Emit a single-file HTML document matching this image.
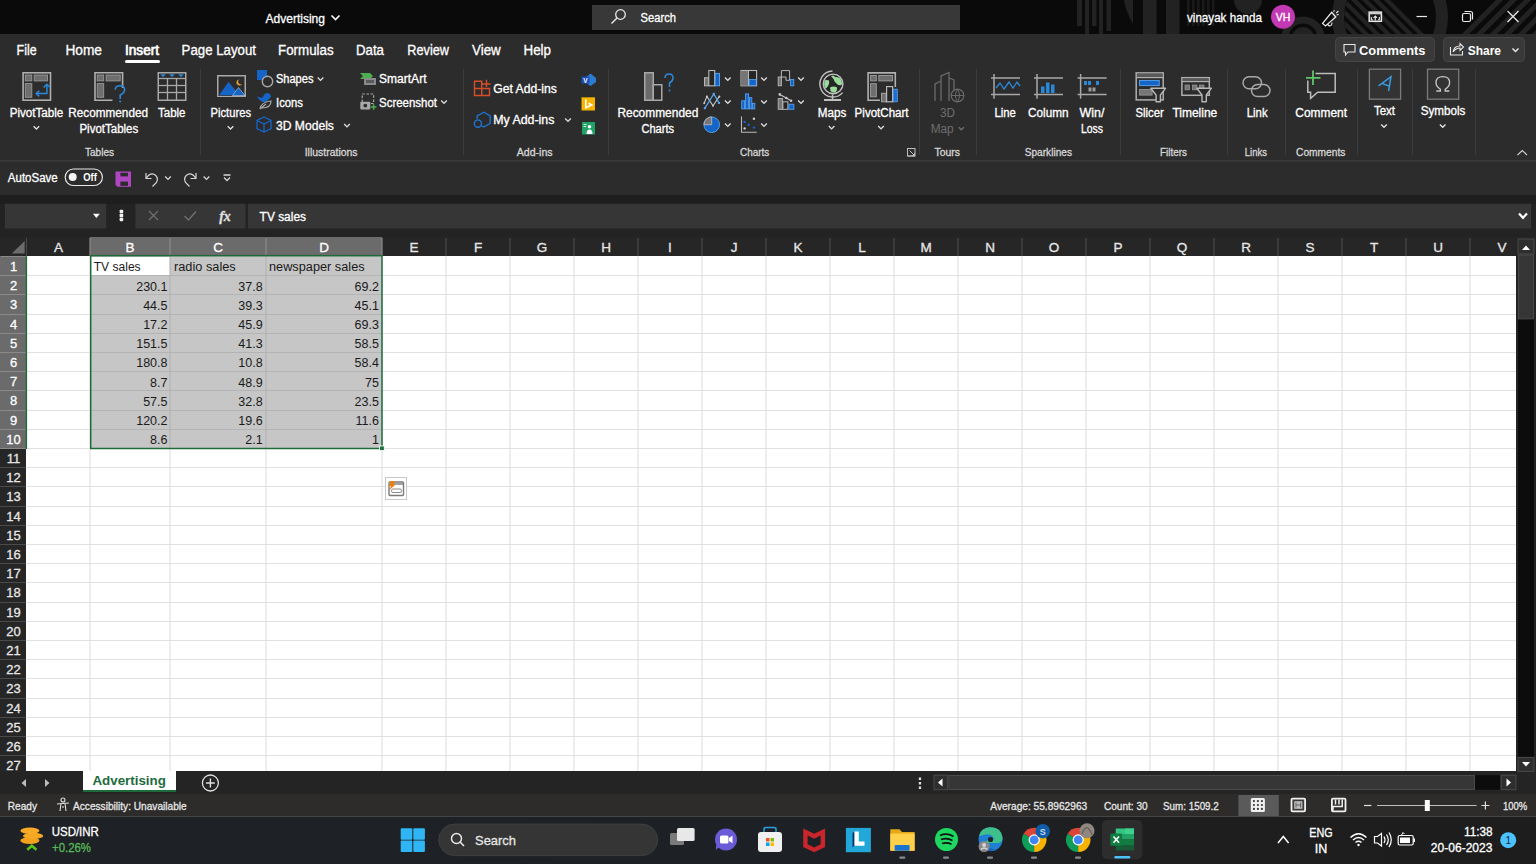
<!DOCTYPE html>
<html><head><meta charset="utf-8"><title>Advertising - Excel</title>
<style>
*{margin:0;padding:0}
html,body{width:1536px;height:864px;overflow:hidden;background:#0a0a0a}
svg{display:block;font-family:"Liberation Sans",sans-serif}
text{white-space:pre}
</style></head><body>
<svg width="1536" height="864" viewBox="0 0 1536 864">
<defs><clipPath id="gclip"><rect x="26" y="256" width="1490" height="515"/></clipPath><clipPath id="tclip"><rect x="0" y="0" width="1536" height="34"/></clipPath></defs>
<rect x="0" y="0" width="1536" height="34" fill="#0a0a0a"/>
<rect x="0" y="34" width="1536" height="126" fill="#2d2c2c"/>
<rect x="0" y="160" width="1536" height="35" fill="#2d2c2c"/>
<rect x="0" y="160" width="1536" height="1.5" fill="#3a3a3a"/>
<rect x="0" y="195" width="1536" height="43" fill="#232323"/>
<rect x="0" y="195" width="1536" height="9" fill="#1e1e1e"/>
<rect x="0" y="237" width="1536" height="19" fill="#262626"/>
<rect x="0" y="256" width="26" height="515" fill="#262626"/>
<rect x="26" y="256" width="1490" height="515.5" fill="#ffffff"/>
<rect x="1516" y="238" width="20" height="533" fill="#232323"/>
<rect x="0" y="771" width="1536" height="23" fill="#242424"/>
<rect x="0" y="794" width="1536" height="22" fill="#2d2c2b"/>
<defs><linearGradient id="tbg" x1="0" x2="1" y1="0" y2="0"><stop offset="0" stop-color="#1e2226"/><stop offset="0.62" stop-color="#1d2024"/><stop offset="0.76" stop-color="#1e1e1e"/><stop offset="1" stop-color="#1d1d1d"/></linearGradient></defs>
<rect x="0" y="816" width="1536" height="48" fill="url(#tbg)"/>
<g clip-path="url(#tclip)">
<rect x="1077" y="0" width="5" height="26" fill="#222222"/>
<rect x="1085" y="0" width="4" height="34" fill="#222222"/>
<rect x="1092" y="0" width="4.5" height="26" fill="#222222"/>
<rect x="1099" y="0" width="4" height="34" fill="#222222"/>
<rect x="1106.5" y="0" width="4.5" height="31" fill="#222222"/>
<rect x="1143" y="0" width="13.5" height="34" fill="#222222"/>
<rect x="1166" y="0" width="13.5" height="34" fill="#222222"/>
<path d="M1124,0 L1133,0 L1133,24 Q1126,12 1124,0 Z" fill="#222222"/>
<rect x="1187" y="0" width="2.5" height="26" fill="#1a1a1a"/>
<rect x="1192" y="0" width="2.5" height="26" fill="#1a1a1a"/>
<rect x="1197" y="0" width="2.5" height="26" fill="#1a1a1a"/>
<rect x="1202" y="0" width="2.5" height="26" fill="#1a1a1a"/>
<rect x="1207" y="0" width="2.5" height="26" fill="#1a1a1a"/>
<rect x="1212" y="0" width="2.5" height="26" fill="#1a1a1a"/>
<circle cx="1248" cy="0" r="14" fill="#222222"/>
<circle cx="1303" cy="38" r="11" fill="#222222"/>
<circle cx="1303" cy="38" r="18" fill="none" stroke="#222" stroke-width="7"/>
<circle cx="1390" cy="17" r="52" fill="none" stroke="#222" stroke-width="12"/>
<clipPath id="dclip"><circle cx="1390" cy="17" r="46"/></clipPath>
<g clip-path="url(#dclip)">
<path d="M1318,0 L1324,0 L1358,34 L1352,34 Z" fill="#222222"/>
<path d="M1329,0 L1335,0 L1369,34 L1363,34 Z" fill="#222222"/>
<path d="M1340,0 L1346,0 L1380,34 L1374,34 Z" fill="#222222"/>
<path d="M1351,0 L1357,0 L1391,34 L1385,34 Z" fill="#222222"/>
<path d="M1362,0 L1368,0 L1402,34 L1396,34 Z" fill="#222222"/>
<path d="M1373,0 L1379,0 L1413,34 L1407,34 Z" fill="#222222"/>
<path d="M1384,0 L1390,0 L1424,34 L1418,34 Z" fill="#222222"/>
</g>
<path d="M1462,34 L1469,34 L1503,0 L1496,0 Z" fill="#222222"/>
<path d="M1476,34 L1483,34 L1517,0 L1510,0 Z" fill="#222222"/>
<path d="M1490,34 L1497,34 L1531,0 L1524,0 Z" fill="#222222"/>
<path d="M1504,34 L1511,34 L1545,0 L1538,0 Z" fill="#222222"/>
<path d="M1518,34 L1525,34 L1559,0 L1552,0 Z" fill="#222222"/>
<path d="M1532,34 L1539,34 L1573,0 L1566,0 Z" fill="#222222"/>
</g>
<text x="265.5" y="22.5" font-size="13" fill="#ffffff" textLength="59.5" lengthAdjust="spacingAndGlyphs" stroke="#ffffff" stroke-width="0.3">Advertising</text>
<path d="M331.5,15.5 L335.5,19.5 L339.5,15.5" fill="none" stroke="#ffffff" stroke-width="1.625"/>
<rect x="592" y="5" width="368" height="25" fill="#383838"/>
<circle cx="620.5" cy="14.5" r="4.8" fill="none" stroke="#e8e8e8" stroke-width="1.3"/>
<line x1="617" y1="18" x2="611.5" y2="23.5" stroke="#e8e8e8" stroke-width="1.4"/>
<text x="640.5" y="21.5" font-size="12.5" fill="#ffffff" textLength="35.5" lengthAdjust="spacingAndGlyphs" stroke="#ffffff" stroke-width="0.3">Search</text>
<text x="1187" y="21.5" font-size="13" fill="#ffffff" textLength="75" lengthAdjust="spacingAndGlyphs" stroke="#ffffff" stroke-width="0.3">vinayak handa</text>
<circle cx="1283" cy="16.7" r="12" fill="#c239b3"/>
<text x="1283" y="20.8" font-size="10.5" fill="#ffffff" text-anchor="middle" stroke="#ffffff" stroke-width="0.3">VH</text>
<path d="M1322.6,23.4 L1331.7,12.3 L1335.8,17 L1325.5,26 Z" fill="none" stroke="#e8e8e8" stroke-width="1.3"/>
<path d="M1327.5,24 Q1328.5,26.5 1331,25.5 Q1332.5,24.5 1331.8,22.5" fill="none" stroke="#e8e8e8" stroke-width="1.2"/>
<path d="M1333.6,11.8 L1334.4,10.3 M1336.2,13 L1338.4,11 M1336.6,15 L1338.6,14.4" fill="none" stroke="#e8e8e8" stroke-width="1.1"/>
<rect x="1369.2" y="12.1" width="12.2" height="9.2" fill="none" stroke="#e8e8e8" stroke-width="1.5"/>
<rect x="1369.2" y="12.1" width="12.2" height="2.2" fill="#d0d0d0"/>
<path d="M1375.3,20.5 L1375.3,16 M1373.5,17.8 L1375.3,16 L1377.1,17.8 M1371.3,17 L1371.3,19.8 L1372.8,19.8 M1379.3,17 L1379.3,19.8 L1377.8,19.8" fill="none" stroke="#e8e8e8" stroke-width="1.1"/>
<line x1="1416.5" y1="16.5" x2="1427" y2="16.5" stroke="#e8e8e8" stroke-width="1.2"/>
<rect x="1462.5" y="13.5" width="8" height="8" fill="none" rx="1.5" stroke="#e8e8e8" stroke-width="1.2"/>
<path d="M1464.5,11.5 L1470.5,11.5 Q1472.5,11.5 1472.5,13.5 L1472.5,19.5" fill="none" stroke="#e8e8e8" stroke-width="1.2"/>
<path d="M1507.5,11 L1518.5,22 M1518.5,11 L1507.5,22" fill="none" stroke="#e8e8e8" stroke-width="1.2"/>
<text x="16.6" y="55" font-size="14" fill="#ffffff" textLength="20" lengthAdjust="spacingAndGlyphs" stroke="#ffffff" stroke-width="0.3">File</text>
<text x="65.4" y="55" font-size="14" fill="#ffffff" textLength="36.6" lengthAdjust="spacingAndGlyphs" stroke="#ffffff" stroke-width="0.3">Home</text>
<text x="125" y="55" font-size="14" fill="#ffffff" textLength="34" lengthAdjust="spacingAndGlyphs" stroke="#ffffff" stroke-width="0.7">Insert</text>
<text x="181.6" y="55" font-size="14" fill="#ffffff" textLength="74.4" lengthAdjust="spacingAndGlyphs" stroke="#ffffff" stroke-width="0.3">Page Layout</text>
<text x="278" y="55" font-size="14" fill="#ffffff" textLength="55.7" lengthAdjust="spacingAndGlyphs" stroke="#ffffff" stroke-width="0.3">Formulas</text>
<text x="356" y="55" font-size="14" fill="#ffffff" textLength="28" lengthAdjust="spacingAndGlyphs" stroke="#ffffff" stroke-width="0.3">Data</text>
<text x="407.3" y="55" font-size="14" fill="#ffffff" textLength="41.7" lengthAdjust="spacingAndGlyphs" stroke="#ffffff" stroke-width="0.3">Review</text>
<text x="472" y="55" font-size="14" fill="#ffffff" textLength="28.7" lengthAdjust="spacingAndGlyphs" stroke="#ffffff" stroke-width="0.3">View</text>
<text x="523.5" y="55" font-size="14" fill="#ffffff" textLength="27.5" lengthAdjust="spacingAndGlyphs" stroke="#ffffff" stroke-width="0.3">Help</text>
<rect x="125" y="60" width="35" height="3" fill="#ffffff" rx="1.5"/>
<rect x="1335.5" y="37.5" width="99" height="24" fill="#393939" rx="4" stroke="#454545" stroke-width="1"/>
<path d="M1344,44.5 L1355,44.5 L1355,52 L1348,52 L1345.5,55 L1345.5,52 L1344,52 Z" fill="none" stroke="#e8e8e8" stroke-width="1.1"/>
<text x="1359" y="54.5" font-size="13.5" fill="#ffffff" font-weight="700" textLength="66.5" lengthAdjust="spacingAndGlyphs">Comments</text>
<rect x="1443.5" y="37.5" width="81" height="24" fill="#393939" rx="4" stroke="#454545" stroke-width="1"/>
<path d="M1450.5,47 L1450.5,55 L1462.5,55 L1462.5,51 M1453,52 Q1454,46 1460,46 L1460,43.5 L1463.5,47 L1460,50.5 L1460,48 Q1456,48 1453,52 Z" fill="none" stroke="#e8e8e8" stroke-width="1.1"/>
<text x="1467.7" y="54.5" font-size="13.5" fill="#ffffff" font-weight="700" textLength="33.3" lengthAdjust="spacingAndGlyphs">Share</text>
<path d="M1512.5,48.5 L1515.5,51.5 L1518.5,48.5" fill="none" stroke="#e8e8e8" stroke-width="1.5"/>
<line x1="200.5" y1="69" x2="200.5" y2="155" stroke="#3c3c3c" stroke-width="1"/>
<line x1="463.5" y1="69" x2="463.5" y2="155" stroke="#3c3c3c" stroke-width="1"/>
<line x1="608.5" y1="69" x2="608.5" y2="155" stroke="#3c3c3c" stroke-width="1"/>
<line x1="919.5" y1="69" x2="919.5" y2="155" stroke="#3c3c3c" stroke-width="1"/>
<line x1="976.5" y1="69" x2="976.5" y2="155" stroke="#3c3c3c" stroke-width="1"/>
<line x1="1120.5" y1="69" x2="1120.5" y2="155" stroke="#3c3c3c" stroke-width="1"/>
<line x1="1227.5" y1="69" x2="1227.5" y2="155" stroke="#3c3c3c" stroke-width="1"/>
<line x1="1285.5" y1="69" x2="1285.5" y2="155" stroke="#3c3c3c" stroke-width="1"/>
<line x1="1357.5" y1="69" x2="1357.5" y2="155" stroke="#3c3c3c" stroke-width="1"/>
<line x1="1412.5" y1="69" x2="1412.5" y2="155" stroke="#3c3c3c" stroke-width="1"/>
<line x1="1475.5" y1="69" x2="1475.5" y2="155" stroke="#3c3c3c" stroke-width="1"/>
<text x="85" y="156" font-size="10.5" fill="#d6d6d6" textLength="29" lengthAdjust="spacingAndGlyphs" stroke="#d6d6d6" stroke-width="0.3">Tables</text>
<text x="304.7" y="156" font-size="10.5" fill="#d6d6d6" textLength="52.9" lengthAdjust="spacingAndGlyphs" stroke="#d6d6d6" stroke-width="0.3">Illustrations</text>
<text x="516.7" y="156" font-size="10.5" fill="#d6d6d6" textLength="36" lengthAdjust="spacingAndGlyphs" stroke="#d6d6d6" stroke-width="0.3">Add-ins</text>
<text x="740" y="156" font-size="10.5" fill="#d6d6d6" textLength="29.3" lengthAdjust="spacingAndGlyphs" stroke="#d6d6d6" stroke-width="0.3">Charts</text>
<text x="934.5" y="156" font-size="10.5" fill="#d6d6d6" textLength="25.5" lengthAdjust="spacingAndGlyphs" stroke="#d6d6d6" stroke-width="0.3">Tours</text>
<text x="1024.7" y="156" font-size="10.5" fill="#d6d6d6" textLength="47.3" lengthAdjust="spacingAndGlyphs" stroke="#d6d6d6" stroke-width="0.3">Sparklines</text>
<text x="1160" y="156" font-size="10.5" fill="#d6d6d6" textLength="27" lengthAdjust="spacingAndGlyphs" stroke="#d6d6d6" stroke-width="0.3">Filters</text>
<text x="1244.8" y="156" font-size="10.5" fill="#d6d6d6" textLength="22.2" lengthAdjust="spacingAndGlyphs" stroke="#d6d6d6" stroke-width="0.3">Links</text>
<text x="1296" y="156" font-size="10.5" fill="#d6d6d6" textLength="49.4" lengthAdjust="spacingAndGlyphs" stroke="#d6d6d6" stroke-width="0.3">Comments</text>
<text x="9.7" y="116.5" font-size="12" fill="#ffffff" textLength="53.6" lengthAdjust="spacingAndGlyphs" stroke="#ffffff" stroke-width="0.3">PivotTable</text>
<text x="68.3" y="116.5" font-size="12" fill="#ffffff" textLength="79.7" lengthAdjust="spacingAndGlyphs" stroke="#ffffff" stroke-width="0.3">Recommended</text>
<text x="158" y="116.5" font-size="12" fill="#ffffff" textLength="27.5" lengthAdjust="spacingAndGlyphs" stroke="#ffffff" stroke-width="0.3">Table</text>
<text x="210.5" y="116.5" font-size="12" fill="#ffffff" textLength="40.5" lengthAdjust="spacingAndGlyphs" stroke="#ffffff" stroke-width="0.3">Pictures</text>
<text x="617.4" y="116.5" font-size="12" fill="#ffffff" textLength="80.9" lengthAdjust="spacingAndGlyphs" stroke="#ffffff" stroke-width="0.3">Recommended</text>
<text x="817.8" y="116.5" font-size="12" fill="#ffffff" textLength="28.5" lengthAdjust="spacingAndGlyphs" stroke="#ffffff" stroke-width="0.3">Maps</text>
<text x="854.6" y="116.5" font-size="12" fill="#ffffff" textLength="54" lengthAdjust="spacingAndGlyphs" stroke="#ffffff" stroke-width="0.3">PivotChart</text>
<text x="994.5" y="116.5" font-size="12" fill="#ffffff" textLength="21.4" lengthAdjust="spacingAndGlyphs" stroke="#ffffff" stroke-width="0.3">Line</text>
<text x="1028" y="116.5" font-size="12" fill="#ffffff" textLength="40.5" lengthAdjust="spacingAndGlyphs" stroke="#ffffff" stroke-width="0.3">Column</text>
<text x="1079.5" y="116.5" font-size="12" fill="#ffffff" textLength="24.9" lengthAdjust="spacingAndGlyphs" stroke="#ffffff" stroke-width="0.3">Win/</text>
<text x="1135.4" y="116.5" font-size="12" fill="#ffffff" textLength="28.5" lengthAdjust="spacingAndGlyphs" stroke="#ffffff" stroke-width="0.3">Slicer</text>
<text x="1172.4" y="116.5" font-size="12" fill="#ffffff" textLength="44.9" lengthAdjust="spacingAndGlyphs" stroke="#ffffff" stroke-width="0.3">Timeline</text>
<text x="1246.7" y="116.5" font-size="12" fill="#ffffff" textLength="20.9" lengthAdjust="spacingAndGlyphs" stroke="#ffffff" stroke-width="0.3">Link</text>
<text x="1295.3" y="116.5" font-size="12" fill="#ffffff" textLength="51.7" lengthAdjust="spacingAndGlyphs" stroke="#ffffff" stroke-width="0.3">Comment</text>
<text x="79.4" y="132.6" font-size="12" fill="#ffffff" textLength="58.9" lengthAdjust="spacingAndGlyphs" stroke="#ffffff" stroke-width="0.3">PivotTables</text>
<text x="641.4" y="132.6" font-size="12" fill="#ffffff" textLength="32.6" lengthAdjust="spacingAndGlyphs" stroke="#ffffff" stroke-width="0.3">Charts</text>
<text x="1081" y="132.6" font-size="12" fill="#ffffff" textLength="22" lengthAdjust="spacingAndGlyphs" stroke="#ffffff" stroke-width="0.3">Loss</text>
<text x="1373.9" y="114.8" font-size="12" fill="#ffffff" textLength="21.1" lengthAdjust="spacingAndGlyphs" stroke="#ffffff" stroke-width="0.3">Text</text>
<text x="1420.7" y="114.8" font-size="12" fill="#ffffff" textLength="44.7" lengthAdjust="spacingAndGlyphs" stroke="#ffffff" stroke-width="0.3">Symbols</text>
<text x="940" y="116.5" font-size="12" fill="#6e6e6e" textLength="15" lengthAdjust="spacingAndGlyphs">3D</text>
<text x="930.7" y="132.5" font-size="12" fill="#6e6e6e" textLength="23" lengthAdjust="spacingAndGlyphs">Map</text>
<path d="M958.6999999999999,127.2 L961.3,129.8 L963.9,127.2" fill="none" stroke="#6e6e6e" stroke-width="1.375"/>
<path d="M33.6,126.3 L36.4,129.1 L39.199999999999996,126.3" fill="none" stroke="#e0e0e0" stroke-width="1.375"/>
<path d="M227.7,126.3 L230.5,129.1 L233.3,126.3" fill="none" stroke="#e0e0e0" stroke-width="1.375"/>
<path d="M828.8000000000001,126.1 L831.6,128.9 L834.4,126.1" fill="none" stroke="#e0e0e0" stroke-width="1.375"/>
<path d="M878.2,126.1 L881,128.9 L883.8,126.1" fill="none" stroke="#e0e0e0" stroke-width="1.375"/>
<path d="M1381.2,124.39999999999999 L1384,127.2 L1386.8,124.39999999999999" fill="none" stroke="#e0e0e0" stroke-width="1.375"/>
<path d="M1439.9,124.39999999999999 L1442.7,127.2 L1445.5,124.39999999999999" fill="none" stroke="#e0e0e0" stroke-width="1.375"/>
<path d="M1517.5,155 L1522.3,150.5 L1527,155" fill="none" stroke="#d0d0d0" stroke-width="1.1"/>
<path d="M907.5,148.5 L907.5,156 L915,156 M909.5,150.5 L914.5,155.5 M912,155.5 L914.5,155.5 L914.5,153" fill="none" stroke="#bdbdbd" stroke-width="1"/>
<rect x="907.5" y="148.5" width="7.5" height="7.5" fill="none" stroke="#bdbdbd" stroke-width="1"/>
<text x="275.9" y="83.4" font-size="12" fill="#ffffff" textLength="37.6" lengthAdjust="spacingAndGlyphs" stroke="#ffffff" stroke-width="0.3">Shapes</text>
<text x="276" y="106.6" font-size="12" fill="#ffffff" textLength="27" lengthAdjust="spacingAndGlyphs" stroke="#ffffff" stroke-width="0.3">Icons</text>
<text x="276" y="129.8" font-size="12" fill="#ffffff" textLength="57.9" lengthAdjust="spacingAndGlyphs" stroke="#ffffff" stroke-width="0.3">3D Models</text>
<text x="379" y="83.4" font-size="12" fill="#ffffff" textLength="47.5" lengthAdjust="spacingAndGlyphs" stroke="#ffffff" stroke-width="0.3">SmartArt</text>
<text x="379" y="106.6" font-size="12" fill="#ffffff" textLength="58" lengthAdjust="spacingAndGlyphs" stroke="#ffffff" stroke-width="0.3">Screenshot</text>
<text x="493.3" y="92.5" font-size="12" fill="#ffffff" textLength="63.5" lengthAdjust="spacingAndGlyphs" stroke="#ffffff" stroke-width="0.3">Get Add-ins</text>
<text x="493.3" y="124.3" font-size="12" fill="#ffffff" textLength="61.1" lengthAdjust="spacingAndGlyphs" stroke="#ffffff" stroke-width="0.3">My Add-ins</text>
<path d="M317.7,77.6 L320.5,80.4 L323.3,77.6" fill="none" stroke="#e0e0e0" stroke-width="1.375"/>
<path d="M344.2,124.1 L347,126.9 L349.8,124.1" fill="none" stroke="#e0e0e0" stroke-width="1.375"/>
<path d="M441.2,100.6 L444,103.4 L446.8,100.6" fill="none" stroke="#e0e0e0" stroke-width="1.375"/>
<path d="M565.2,118.6 L568,121.4 L570.8,118.6" fill="none" stroke="#e0e0e0" stroke-width="1.375"/>
<rect x="23.1" y="72.8" width="27.4" height="27.4" fill="none" stroke="#b0b0b0" stroke-width="1.6"/>
<rect x="25.3" y="75" width="6.5" height="5.900000000000006" fill="#6e6e6e" stroke="#9a9a9a" stroke-width="0.9"/>
<rect x="34.2" y="75" width="13.299999999999997" height="5.900000000000006" fill="#6e6e6e" stroke="#9a9a9a" stroke-width="0.9"/>
<rect x="25.3" y="83.6" width="6.5" height="13.700000000000003" fill="#6e6e6e" stroke="#9a9a9a" stroke-width="0.9"/>
<path d="M36.5,93.6 L46.9,93.6 L46.9,84.5 M43.6,87.5 L46.9,84.2 L50.2,87.5 M39.3,90.8 L36.2,93.6 L39.3,96.4" fill="none" stroke="#2b88d8" stroke-width="1.5"/>
<path d="M122.6,88 L122.6,72.8 L95,72.8 L95,100.2 L112.5,100.2" fill="none" stroke="#b0b0b0" stroke-width="1.6"/>
<rect x="97.2" y="75" width="6.5" height="5.900000000000006" fill="#6e6e6e" stroke="#9a9a9a" stroke-width="0.9"/>
<rect x="106.1" y="75" width="14.100000000000009" height="5.900000000000006" fill="#6e6e6e" stroke="#9a9a9a" stroke-width="0.9"/>
<rect x="97.2" y="83.6" width="6.5" height="13.700000000000003" fill="#6e6e6e" stroke="#9a9a9a" stroke-width="0.9"/>
<path d="M115.3,89.8 Q115.3,85.8 120,85.8 Q124.6,85.8 124.6,89.8 Q124.6,92.8 120.2,95 L120.2,99" fill="none" stroke="#2b88d8" stroke-width="1.6"/>
<circle cx="120.2" cy="101.6" r="1" fill="#2b88d8"/>
<rect x="158.25" y="72.75" width="27.5" height="27.5" fill="none" stroke="#a8a8a8" stroke-width="1.5"/>
<line x1="158" y1="78.5" x2="186" y2="78.5" stroke="#a8a8a8" stroke-width="1.3"/>
<line x1="158" y1="85.5" x2="186" y2="85.5" stroke="#a8a8a8" stroke-width="1.3"/>
<line x1="158" y1="92.5" x2="186" y2="92.5" stroke="#a8a8a8" stroke-width="1.3"/>
<line x1="167.5" y1="78" x2="167.5" y2="100" stroke="#a8a8a8" stroke-width="1.3"/>
<line x1="176.5" y1="78" x2="176.5" y2="100" stroke="#a8a8a8" stroke-width="1.3"/>
<path d="M160.2,74.3 L165.8,74.3 L163,77.3 Z" fill="#2b88d8"/>
<path d="M169.2,74.3 L174.8,74.3 L172,77.3 Z" fill="#2b88d8"/>
<path d="M178.2,74.3 L183.8,74.3 L181,77.3 Z" fill="#2b88d8"/>
<rect x="217.75" y="75.75" width="27.5" height="20.5" fill="none" stroke="#a8a8a8" stroke-width="1.5"/>
<path d="M218.5,95.5 L228.5,81.5 L240,95.5 Z" fill="#1565c9" stroke="#2d2c2c" stroke-width="0.6"/>
<path d="M232.5,95.5 L238.5,87.5 L245,95.5 Z" fill="#1565c9" stroke="#e0e0e0" stroke-width="0.5"/>
<path d="M239.5,79.5 A3,3 0 1 0 242,84 A2.3,2.3 0 0 1 239.5,79.5 Z" fill="#e8a33d"/>
<rect x="257" y="70" width="10" height="10" fill="#1565c9"/>
<circle cx="267.5" cy="81.5" r="5.2" fill="#2d2c2c" stroke="#a8a8a8" stroke-width="1.4"/>
<path d="M257,96 Q261,99 263,97 Q264,93 268,93 Q271,94 271,97 L266,102 Q260,103 257,96 Z" fill="#1565c9"/>
<path d="M260,109 Q261,102 271,101 Q271,108 262,108 M260,109 L266,104" fill="none" stroke="#a8a8a8" stroke-width="1.2"/>
<path d="M264,117 L271,120.5 L271,128.5 L264,132 L257,128.5 L257,120.5 Z M257,120.5 L264,124 L271,120.5 M264,124 L264,132" fill="none" stroke="#1565c9" stroke-width="1.3"/>
<path d="M360,73 L370,73 L373,76 L370,79 L360,79 L363,76 Z" fill="#4caf50"/>
<rect x="364" y="78" width="12" height="7" fill="#8a8a8a"/>
<rect x="366" y="80" width="8" height="3" fill="#5a5a5a"/>
<rect x="362.2" y="94" width="11.4" height="9.5" fill="none" stroke="#a8a8a8" stroke-width="1.2" stroke-dasharray="2.6,1.6"/>
<rect x="360.3" y="101.8" width="10" height="7.6" fill="#a8a8a8" rx="1"/>
<circle cx="365.3" cy="105.6" r="1.9" fill="#2d2c2c"/>
<path d="M370.8,107 L376.4,107 M373.6,104.2 L373.6,109.8" fill="none" stroke="#4caf50" stroke-width="1.5"/>
<path d="M474.5,95.5 L474.5,81.3 L481.7,81.3 L481.7,95.5 Z M474.5,88.5 L489.5,88.5 L489.5,95.5 L474.5,95.5" fill="none" stroke="#d74e2b" stroke-width="1.4"/>
<path d="M482,84 L490.5,84 M486.5,79.8 L486.5,87" fill="none" stroke="#d74e2b" stroke-width="1.4"/>
<path d="M477.2,118.8 L477.2,115.8 L483.8,112.2 L490.2,115.8 L490.2,123.4 L483.8,127 L481.5,125.8" fill="none" stroke="#1f73d0" stroke-width="1.4"/>
<circle cx="477.9" cy="123.6" r="3.6" fill="none" stroke="#1f73d0" stroke-width="1.4"/>
<path d="M590.5,73.5 L596,78 L596,82 L590.5,86 L585,82 L585,78 Z" fill="#2b7cd3"/>
<rect x="581.5" y="76.5" width="8" height="7" fill="#1b4fb5"/>
<text x="585.5" y="82.5" font-size="6.5" fill="#ffffff" font-weight="700" text-anchor="middle">V</text>
<rect x="581.5" y="97.3" width="13.5" height="13.2" fill="#f4b400"/>
<path d="M585.8,99.5 L585.8,107.8 L591.8,105 L588.5,103.2" fill="none" stroke="#ffffff" stroke-width="1.6"/>
<rect x="582" y="122" width="13" height="12.5" fill="#21a366"/>
<circle cx="589.5" cy="126.8" r="1.8" fill="#ffffff"/>
<path d="M586.5,134 Q586.5,129.5 589.5,129.5 Q592.5,129.5 592.5,134 Z" fill="#ffffff"/>
<line x1="583.5" y1="124.5" x2="586.5" y2="124.5" stroke="#ffffff" stroke-width="0.8"/>
<line x1="583.5" y1="126.5" x2="586" y2="126.5" stroke="#ffffff" stroke-width="0.8"/>
<rect x="644.75" y="72.75" width="8.5" height="27.5" fill="#6a6a6a" stroke="#a8a8a8" stroke-width="1.5"/>
<rect x="653.25" y="84.75" width="8.5" height="15.5" fill="none" stroke="#a8a8a8" stroke-width="1.5"/>
<path d="M665,78 Q665,74 669,74 Q673,74 673,78 Q673,81 669.5,83 L669.5,87" fill="none" stroke="#2b88d8" stroke-width="1.5"/>
<circle cx="669.5" cy="90.5" r="0.9" fill="#2b88d8"/>
<rect x="704.5" y="77.8" width="4.3" height="8" fill="#767676" stroke="#b8b8b8" stroke-width="1"/>
<rect x="708.8" y="70.5" width="5.9" height="15.3" fill="#262626" stroke="#b8b8b8" stroke-width="1.1"/>
<rect x="715.2" y="73.4" width="4.3" height="12.4" fill="#1565c9" stroke="#5aa7f0" stroke-width="0.9"/>
<rect x="741" y="70.5" width="15.6" height="15.3" fill="#262626" stroke="#b8b8b8" stroke-width="1.1"/>
<rect x="741.5" y="71" width="6.8" height="14.3" fill="#767676"/>
<line x1="748.5" y1="70.5" x2="748.5" y2="85.8" stroke="#b8b8b8" stroke-width="1"/>
<rect x="749.2" y="79.5" width="7" height="5.9" fill="#1565c9" stroke="#5aa7f0" stroke-width="0.8"/>
<rect x="778.2" y="77" width="3.2" height="8.8" fill="#767676" stroke="#b8b8b8" stroke-width="0.9"/>
<path d="M781.4,77 L781.4,70.6 L789.6,70.6 L789.6,80.3 L786,80.3 L786,77 Z" fill="#262626" stroke="#b8b8b8" stroke-width="1"/>
<rect x="790.6" y="79.4" width="3.2" height="6.4" fill="#1565c9" stroke="#5aa7f0" stroke-width="0.8"/>
<path d="M704.2,103.3 L706.9,96.4 L713,105.7 L719.4,96.4" fill="none" stroke="#c8c8c8" stroke-width="1.1"/>
<circle cx="706.9" cy="96.4" r="1" fill="#c8c8c8"/>
<circle cx="713" cy="105.7" r="1" fill="#c8c8c8"/>
<circle cx="719.4" cy="96.4" r="1" fill="#c8c8c8"/>
<circle cx="704.2" cy="103.3" r="1" fill="#c8c8c8"/>
<path d="M704.9,108.1 L713.8,94 L719,102.9" fill="none" stroke="#5aa7f0" stroke-width="1.2"/>
<circle cx="704.9" cy="108.1" r="1.2" fill="#5aa7f0"/>
<circle cx="713.8" cy="94" r="1.2" fill="#5aa7f0"/>
<circle cx="719" cy="102.9" r="1.2" fill="#5aa7f0"/>
<rect x="741.6999999999999" y="100.80000000000001" width="2.9000000000000457" height="8.09999999999999" fill="#1565c9" stroke="#5aa7f0" stroke-width="0.8"/>
<rect x="745.4" y="93.9" width="3.2" height="14.999999999999996" fill="#1565c9" stroke="#5aa7f0" stroke-width="0.8"/>
<rect x="749.4" y="97.60000000000001" width="2.4000000000000457" height="11.299999999999994" fill="#1565c9" stroke="#5aa7f0" stroke-width="0.8"/>
<rect x="752.6" y="103.30000000000001" width="2.2" height="5.599999999999992" fill="#1565c9" stroke="#5aa7f0" stroke-width="0.8"/>
<rect x="778.2" y="98.6" width="4.4" height="10.7" fill="#767676" stroke="#b8b8b8" stroke-width="0.9"/>
<rect x="782.9" y="101.8" width="5" height="7.5" fill="#262626" stroke="#b8b8b8" stroke-width="1"/>
<rect x="788.9" y="104.2" width="5" height="5.1" fill="#1565c9" stroke="#5aa7f0" stroke-width="0.8"/>
<path d="M779.8,94.4 L786.3,98 L791.1,100.8" fill="none" stroke="#c8c8c8" stroke-width="1.1"/>
<circle cx="779.8" cy="94.4" r="1.3" fill="#c8c8c8"/>
<circle cx="786.3" cy="98" r="1.3" fill="#c8c8c8"/>
<circle cx="791.1" cy="100.8" r="1.3" fill="#c8c8c8"/>
<circle cx="711.7" cy="124.7" r="7.8" fill="#1565c9" stroke="#5aa7f0" stroke-width="0.9"/>
<path d="M711.7,124.7 L703.9,124.7 A7.8,7.8 0 0 1 711.7,116.9 Z" fill="#767676" stroke="#b8b8b8" stroke-width="0.9"/>
<path d="M741.5,116.6 L741.5,132.2 L756.7,132.2" fill="none" stroke="#b8b8b8" stroke-width="1.1"/>
<circle cx="744.6" cy="121.9" r="1.2" fill="#1565c9"/>
<circle cx="748.6" cy="124.7" r="1.2" fill="#1565c9"/>
<circle cx="753.9" cy="127.6" r="1.2" fill="#1565c9"/>
<circle cx="753.9" cy="118.7" r="1.2" fill="#d0d0d0"/>
<circle cx="744.6" cy="128.4" r="1.2" fill="#d0d0d0"/>
<path d="M725.0,77.6 L727.8,80.4 L730.5999999999999,77.6" fill="none" stroke="#e0e0e0" stroke-width="1.375"/>
<path d="M761.2,77.6 L764,80.4 L766.8,77.6" fill="none" stroke="#e0e0e0" stroke-width="1.375"/>
<path d="M798.2,77.6 L801,80.4 L803.8,77.6" fill="none" stroke="#e0e0e0" stroke-width="1.375"/>
<path d="M725.0,100.6 L727.8,103.4 L730.5999999999999,100.6" fill="none" stroke="#e0e0e0" stroke-width="1.375"/>
<path d="M761.2,100.6 L764,103.4 L766.8,100.6" fill="none" stroke="#e0e0e0" stroke-width="1.375"/>
<path d="M798.2,100.6 L801,103.4 L803.8,100.6" fill="none" stroke="#e0e0e0" stroke-width="1.375"/>
<path d="M725.0,123.6 L727.8,126.4 L730.5999999999999,123.6" fill="none" stroke="#e0e0e0" stroke-width="1.375"/>
<path d="M761.2,123.6 L764,126.4 L766.8,123.6" fill="none" stroke="#e0e0e0" stroke-width="1.375"/>
<circle cx="833.1" cy="83.9" r="9.8" fill="#262626" stroke="#c0c0c0" stroke-width="1.4"/>
<g clip-path="url(#globeclip)">
<path d="M831,76 Q834,74.5 835,77 Q838,76.5 841.5,79 Q843,82 841.5,85 Q838,86 836.5,83.5 Q834.5,82 833.5,79 Z" fill="#98dc9a"/>
<path d="M823.5,81 Q826,79.5 829,80.5 Q829.5,84 828,86 Q826.5,89 824,89 Q822.5,85 823.5,81 Z" fill="#98dc9a"/>
<path d="M830,87.5 Q833,86 836.5,87 Q838,89.5 835.5,92.5 Q832,93.5 830.5,91 Z" fill="#98dc9a"/>
</g>
<defs><clipPath id="globeclip"><circle cx="833.1" cy="83.9" r="9"/></clipPath></defs>
<path d="M832.5,71 A13,13 0 1 0 842.6,92.6" fill="none" stroke="#c0c0c0" stroke-width="1.4"/>
<line x1="832.5" y1="94.5" x2="832.5" y2="99.5" stroke="#c0c0c0" stroke-width="1.4"/>
<line x1="824" y1="100" x2="841" y2="100" stroke="#c0c0c0" stroke-width="2"/>
<path d="M880,100.2 L868.1,100.2 L868.1,72.9 L895.3,72.9 L895.3,87" fill="none" stroke="#b0b0b0" stroke-width="1.6"/>
<rect x="870.6" y="75.5" width="5.699999999999932" height="5.400000000000006" fill="#6e6e6e" stroke="#a0a0a0" stroke-width="0.9"/>
<rect x="878.8" y="75.5" width="13.800000000000068" height="5.400000000000006" fill="#6e6e6e" stroke="#a0a0a0" stroke-width="0.9"/>
<rect x="870.6" y="83.7" width="5.699999999999932" height="13.099999999999994" fill="#6e6e6e" stroke="#a0a0a0" stroke-width="0.9"/>
<rect x="881.6" y="93.3" width="4.6" height="8.5" fill="#6e6e6e" stroke="#a8a8a8" stroke-width="1"/>
<rect x="886.6" y="86.6" width="6" height="15.2" fill="#262626" stroke="#b8b8b8" stroke-width="1.2"/>
<rect x="893.3" y="89.2" width="4" height="12.6" fill="#1a6fd6" stroke="#5aa0e8" stroke-width="0.8"/>
<path d="M935,101 L935,84 L941,81 L941,101 M941,101 L941,76 L949,72.5 L949,101 M949,78 L954,80 L954,90" fill="none" stroke="#6a6a6a" stroke-width="1.3"/>
<circle cx="957.5" cy="95.5" r="6.3" fill="none" stroke="#6a6a6a" stroke-width="1.2"/>
<path d="M951.2,95.5 L963.8,95.5 M957.5,89.2 Q953.5,95.5 957.5,101.8 Q961.5,95.5 957.5,89.2" fill="none" stroke="#6a6a6a" stroke-width="1"/>
<line x1="994" y1="74" x2="994" y2="98.7" stroke="#a8a8a8" stroke-width="1.5"/>
<line x1="991" y1="78" x2="1020" y2="78" stroke="#a8a8a8" stroke-width="1.5"/>
<line x1="991" y1="94.5" x2="1020" y2="94.5" stroke="#a8a8a8" stroke-width="1.5"/>
<path d="M996,88 L1000,83 L1004,89 L1009,82 L1013,88 L1017,82 L1020,86" fill="none" stroke="#2b88d8" stroke-width="1.3"/>
<line x1="1037" y1="74" x2="1037" y2="98.7" stroke="#a8a8a8" stroke-width="1.5"/>
<line x1="1034" y1="78" x2="1063" y2="78" stroke="#a8a8a8" stroke-width="1.5"/>
<line x1="1034" y1="94.5" x2="1063" y2="94.5" stroke="#a8a8a8" stroke-width="1.5"/>
<rect x="1041" y="86.5" width="3.5" height="6.5" fill="#2b88d8"/>
<rect x="1046" y="82.5" width="3.5" height="10.5" fill="#2b88d8"/>
<rect x="1051" y="84.5" width="3.5" height="8.5" fill="#2b88d8"/>
<line x1="1080.6" y1="74" x2="1080.6" y2="98.7" stroke="#a8a8a8" stroke-width="1.5"/>
<line x1="1077.6" y1="78" x2="1106.6" y2="78" stroke="#a8a8a8" stroke-width="1.5"/>
<line x1="1077.6" y1="94.5" x2="1106.6" y2="94.5" stroke="#a8a8a8" stroke-width="1.5"/>
<rect x="1084" y="81" width="3" height="4" fill="#2b88d8"/>
<rect x="1088" y="81" width="3" height="4" fill="#2b88d8"/>
<rect x="1096" y="81" width="3" height="4" fill="#2b88d8"/>
<rect x="1088.5" y="87.5" width="3" height="4" fill="#9a9a9a"/>
<rect x="1092.5" y="87.5" width="3" height="4" fill="#9a9a9a"/>
<rect x="1136.2" y="72.9" width="27" height="27" fill="none" stroke="#b0b0b0" stroke-width="1.5"/>
<rect x="1136.9" y="73.6" width="25.6" height="3.6" fill="#5a5a5a"/>
<line x1="1136" y1="77.6" x2="1163.4" y2="77.6" stroke="#b0b0b0" stroke-width="1.2"/>
<rect x="1139.6" y="80.4" width="19.6" height="5.2" fill="#1565c9" stroke="#5aa7f0" stroke-width="0.9"/>
<rect x="1139.6" y="89.5" width="12.5" height="5.6" fill="#767676" stroke="#9a9a9a" stroke-width="0.8"/>
<path d="M1150.8,88.3 L1165.5,88.3 L1160.4,95 L1160.4,101.8 L1156.1,101.8 L1156.1,95 Z" fill="#2a2a2a" stroke="#b8b8b8" stroke-width="1.4" stroke-linejoin="round"/>
<rect x="1181.9" y="77.7" width="27.4" height="17.6" fill="none" stroke="#b0b0b0" stroke-width="1.5"/>
<rect x="1182.6" y="78.4" width="26" height="2.6" fill="#5a5a5a"/>
<line x1="1181.5" y1="81.6" x2="1209.5" y2="81.6" stroke="#b0b0b0" stroke-width="1.2"/>
<rect x="1185" y="85" width="4.5" height="4.8" fill="#767676" stroke="#9a9a9a" stroke-width="0.7"/>
<rect x="1192.4" y="85" width="4.5" height="4.8" fill="#767676" stroke="#9a9a9a" stroke-width="0.7"/>
<rect x="1199.5" y="85" width="4.5" height="4.8" fill="#767676" stroke="#9a9a9a" stroke-width="0.7"/>
<path d="M1196.8,88.3 L1211.3,88.3 L1206.3,95 L1206.3,101.8 L1202,101.8 L1202,95 Z" fill="#2a2a2a" stroke="#b8b8b8" stroke-width="1.4" stroke-linejoin="round"/>
<rect x="1243" y="76.75" width="18.5" height="12" fill="none" rx="6" stroke="#a8a8a8" stroke-width="1.5"/>
<rect x="1251.5" y="84.5" width="18.5" height="12" fill="none" rx="6" stroke="#a8a8a8" stroke-width="1.5"/>
<path d="M1315.5,73.6 L1335.2,73.6 L1335.2,92.2 L1317.7,92.2 L1310.6,98.3 L1310.6,92.2 L1307.8,92.2 L1307.8,80.6" fill="none" stroke="#bdbdbd" stroke-width="1.5"/>
<path d="M1306,77.8 L1320.5,77.8 M1313,70.6 L1313,85" fill="none" stroke="#5fc46a" stroke-width="1.8"/>
<rect x="1369.4" y="69.2" width="31.2" height="30" fill="#333333" stroke="#7a7a7a" stroke-width="1.3"/>
<path d="M1378.6,85.8 L1391,76.7 L1388.6,91.2 M1381.8,83.4 L1389.6,86.2" fill="none" stroke="#3a9be0" stroke-width="1.5"/>
<rect x="1427.5" y="69.2" width="31.2" height="30" fill="#333333" stroke="#7a7a7a" stroke-width="1.3"/>
<path d="M1436.3,91 L1440.4,91 L1440.4,89.2 Q1436,86.8 1436,82.6 Q1436,76.6 1442.8,76.6 Q1449.6,76.6 1449.6,82.6 Q1449.6,86.8 1445.2,89.2 L1445.2,91 L1449.3,91" fill="none" stroke="#c8c8c8" stroke-width="1.3"/>
<text x="7.8" y="181.8" font-size="12.5" fill="#ffffff" textLength="50" lengthAdjust="spacingAndGlyphs" stroke="#ffffff" stroke-width="0.3">AutoSave</text>
<rect x="65.2" y="169" width="37.2" height="16.5" fill="none" rx="8.25" stroke="#e8e8e8" stroke-width="1.2"/>
<circle cx="72.7" cy="177" r="4" fill="#f4f4f4"/>
<text x="83.3" y="181.2" font-size="10.5" fill="#ffffff" font-weight="700" textLength="13.6" lengthAdjust="spacingAndGlyphs">Off</text>
<path d="M115.5,171.5 L131,171.5 L131,186.8 L117.5,186.8 L115.5,184.8 Z" fill="#b146c2"/>
<rect x="120.4" y="172.8" width="7.6" height="3.6" fill="#2c2c2c"/>
<rect x="120.4" y="181.6" width="7.6" height="4.2" fill="#2c2c2c"/>
<path d="M146,173 L146,178.5 L151.5,178.5 M146.5,178 Q150,172.5 154.5,174.5 Q159,177.5 156.5,182.5 L152.5,186.5" fill="none" stroke="#d6d6d6" stroke-width="1.2"/>
<path d="M165.2,176.6 L168,179.4 L170.8,176.6" fill="none" stroke="#d6d6d6" stroke-width="1.375"/>
<path d="M196,173 L196,178.5 L190.5,178.5 M195.5,178 Q192,172.5 187.5,174.5 Q183,177.5 185.5,182.5 L189.5,186.5" fill="none" stroke="#d6d6d6" stroke-width="1.2"/>
<path d="M203.7,176.6 L206.5,179.4 L209.3,176.6" fill="none" stroke="#d6d6d6" stroke-width="1.375"/>
<path d="M223.5,175 L230.5,175 M224,177.5 L227,180.5 L230,177.5" fill="none" stroke="#d6d6d6" stroke-width="1.3"/>
<rect x="5" y="203.7" width="101.2" height="24.7" fill="#363636"/>
<path d="M93,213.8 L99.8,213.8 L96.4,218 Z" fill="#ffffff"/>
<rect x="119.6" y="209.8" width="3.6" height="3.4" fill="#f0f0f0" rx="0.8"/>
<rect x="119.6" y="213.8" width="3.6" height="3.4" fill="#f0f0f0" rx="0.8"/>
<rect x="119.6" y="217.8" width="3.6" height="3.4" fill="#f0f0f0" rx="0.8"/>
<rect x="135.4" y="203.7" width="110.2" height="24.7" fill="#363636"/>
<path d="M149,211 L158,220 M158,211 L149,220" fill="none" stroke="#6e6e6e" stroke-width="1.3"/>
<path d="M184.5,216 L188.5,220 L196,211.5" fill="none" stroke="#6e6e6e" stroke-width="1.5"/>
<text x="225" y="220.5" font-size="14" fill="#e0e0e0" font-family="Liberation Serif" text-anchor="middle" stroke="#e0e0e0" stroke-width="0.3" font-style="italic" font-weight="700">fx</text>
<rect x="248" y="203.7" width="1283" height="24.7" fill="#363636"/>
<text x="259.6" y="220.6" font-size="12.5" fill="#ffffff" textLength="46.4" lengthAdjust="spacingAndGlyphs" stroke="#ffffff" stroke-width="0.3">TV sales</text>
<path d="M1519,213.5 L1523,217.8 L1527,213.5" fill="none" stroke="#ffffff" stroke-width="2.2"/>
<rect x="90" y="237" width="292" height="19" fill="#6b6b6b"/>
<line x1="90" y1="238" x2="90" y2="256" stroke="#8a8a8a" stroke-width="1.2"/>
<line x1="170" y1="238" x2="170" y2="256" stroke="#8a8a8a" stroke-width="1.2"/>
<line x1="266" y1="238" x2="266" y2="256" stroke="#8a8a8a" stroke-width="1.2"/>
<line x1="382" y1="238" x2="382" y2="256" stroke="#8a8a8a" stroke-width="1.2"/>
<line x1="446" y1="238" x2="446" y2="256" stroke="#4a4a4a" stroke-width="1.2"/>
<line x1="510" y1="238" x2="510" y2="256" stroke="#4a4a4a" stroke-width="1.2"/>
<line x1="574" y1="238" x2="574" y2="256" stroke="#4a4a4a" stroke-width="1.2"/>
<line x1="638" y1="238" x2="638" y2="256" stroke="#4a4a4a" stroke-width="1.2"/>
<line x1="702" y1="238" x2="702" y2="256" stroke="#4a4a4a" stroke-width="1.2"/>
<line x1="766" y1="238" x2="766" y2="256" stroke="#4a4a4a" stroke-width="1.2"/>
<line x1="830" y1="238" x2="830" y2="256" stroke="#4a4a4a" stroke-width="1.2"/>
<line x1="894" y1="238" x2="894" y2="256" stroke="#4a4a4a" stroke-width="1.2"/>
<line x1="958" y1="238" x2="958" y2="256" stroke="#4a4a4a" stroke-width="1.2"/>
<line x1="1022" y1="238" x2="1022" y2="256" stroke="#4a4a4a" stroke-width="1.2"/>
<line x1="1086" y1="238" x2="1086" y2="256" stroke="#4a4a4a" stroke-width="1.2"/>
<line x1="1150" y1="238" x2="1150" y2="256" stroke="#4a4a4a" stroke-width="1.2"/>
<line x1="1214" y1="238" x2="1214" y2="256" stroke="#4a4a4a" stroke-width="1.2"/>
<line x1="1278" y1="238" x2="1278" y2="256" stroke="#4a4a4a" stroke-width="1.2"/>
<line x1="1342" y1="238" x2="1342" y2="256" stroke="#4a4a4a" stroke-width="1.2"/>
<line x1="1406" y1="238" x2="1406" y2="256" stroke="#4a4a4a" stroke-width="1.2"/>
<line x1="1470" y1="238" x2="1470" y2="256" stroke="#4a4a4a" stroke-width="1.2"/>
<line x1="26.5" y1="238" x2="26.5" y2="256" stroke="#4a4a4a" stroke-width="1"/>
<path d="M24.7,241 L24.7,253.4 L11.7,253.4 Z" fill="#6b6b6b"/>
<text x="58.5" y="252.3" font-size="13.5" fill="#e6e6e6" text-anchor="middle" stroke="#e6e6e6" stroke-width="0.3">A</text>
<text x="130.0" y="252.3" font-size="13.5" fill="#ffffff" text-anchor="middle" stroke="#ffffff" stroke-width="0.3">B</text>
<text x="218.0" y="252.3" font-size="13.5" fill="#ffffff" text-anchor="middle" stroke="#ffffff" stroke-width="0.3">C</text>
<text x="324.0" y="252.3" font-size="13.5" fill="#ffffff" text-anchor="middle" stroke="#ffffff" stroke-width="0.3">D</text>
<text x="414.0" y="252.3" font-size="13.5" fill="#e6e6e6" text-anchor="middle" stroke="#e6e6e6" stroke-width="0.3">E</text>
<text x="478.0" y="252.3" font-size="13.5" fill="#e6e6e6" text-anchor="middle" stroke="#e6e6e6" stroke-width="0.3">F</text>
<text x="542.0" y="252.3" font-size="13.5" fill="#e6e6e6" text-anchor="middle" stroke="#e6e6e6" stroke-width="0.3">G</text>
<text x="606.0" y="252.3" font-size="13.5" fill="#e6e6e6" text-anchor="middle" stroke="#e6e6e6" stroke-width="0.3">H</text>
<text x="670.0" y="252.3" font-size="13.5" fill="#e6e6e6" text-anchor="middle" stroke="#e6e6e6" stroke-width="0.3">I</text>
<text x="734.0" y="252.3" font-size="13.5" fill="#e6e6e6" text-anchor="middle" stroke="#e6e6e6" stroke-width="0.3">J</text>
<text x="798.0" y="252.3" font-size="13.5" fill="#e6e6e6" text-anchor="middle" stroke="#e6e6e6" stroke-width="0.3">K</text>
<text x="862.0" y="252.3" font-size="13.5" fill="#e6e6e6" text-anchor="middle" stroke="#e6e6e6" stroke-width="0.3">L</text>
<text x="926.0" y="252.3" font-size="13.5" fill="#e6e6e6" text-anchor="middle" stroke="#e6e6e6" stroke-width="0.3">M</text>
<text x="990.0" y="252.3" font-size="13.5" fill="#e6e6e6" text-anchor="middle" stroke="#e6e6e6" stroke-width="0.3">N</text>
<text x="1054.0" y="252.3" font-size="13.5" fill="#e6e6e6" text-anchor="middle" stroke="#e6e6e6" stroke-width="0.3">O</text>
<text x="1118.0" y="252.3" font-size="13.5" fill="#e6e6e6" text-anchor="middle" stroke="#e6e6e6" stroke-width="0.3">P</text>
<text x="1182.0" y="252.3" font-size="13.5" fill="#e6e6e6" text-anchor="middle" stroke="#e6e6e6" stroke-width="0.3">Q</text>
<text x="1246.0" y="252.3" font-size="13.5" fill="#e6e6e6" text-anchor="middle" stroke="#e6e6e6" stroke-width="0.3">R</text>
<text x="1310.0" y="252.3" font-size="13.5" fill="#e6e6e6" text-anchor="middle" stroke="#e6e6e6" stroke-width="0.3">S</text>
<text x="1374.0" y="252.3" font-size="13.5" fill="#e6e6e6" text-anchor="middle" stroke="#e6e6e6" stroke-width="0.3">T</text>
<text x="1438.0" y="252.3" font-size="13.5" fill="#e6e6e6" text-anchor="middle" stroke="#e6e6e6" stroke-width="0.3">U</text>
<text x="1502" y="252.3" font-size="13.5" fill="#e6e6e6" text-anchor="middle" stroke="#e6e6e6" stroke-width="0.3">V</text>
<line x1="90" y1="255.7" x2="382" y2="255.7" stroke="#1d6b3b" stroke-width="1.5"/>
<g clip-path="url(#gclip)">
<line x1="26" y1="275.5" x2="1516" y2="275.5" stroke="#e1e1e1" stroke-width="1"/>
<line x1="26" y1="294.5" x2="1516" y2="294.5" stroke="#e1e1e1" stroke-width="1"/>
<line x1="26" y1="314.5" x2="1516" y2="314.5" stroke="#e1e1e1" stroke-width="1"/>
<line x1="26" y1="333.5" x2="1516" y2="333.5" stroke="#e1e1e1" stroke-width="1"/>
<line x1="26" y1="352.5" x2="1516" y2="352.5" stroke="#e1e1e1" stroke-width="1"/>
<line x1="26" y1="371.5" x2="1516" y2="371.5" stroke="#e1e1e1" stroke-width="1"/>
<line x1="26" y1="390.5" x2="1516" y2="390.5" stroke="#e1e1e1" stroke-width="1"/>
<line x1="26" y1="410.5" x2="1516" y2="410.5" stroke="#e1e1e1" stroke-width="1"/>
<line x1="26" y1="429.5" x2="1516" y2="429.5" stroke="#e1e1e1" stroke-width="1"/>
<line x1="26" y1="448.5" x2="1516" y2="448.5" stroke="#e1e1e1" stroke-width="1"/>
<line x1="26" y1="467.5" x2="1516" y2="467.5" stroke="#e1e1e1" stroke-width="1"/>
<line x1="26" y1="486.5" x2="1516" y2="486.5" stroke="#e1e1e1" stroke-width="1"/>
<line x1="26" y1="506.5" x2="1516" y2="506.5" stroke="#e1e1e1" stroke-width="1"/>
<line x1="26" y1="525.5" x2="1516" y2="525.5" stroke="#e1e1e1" stroke-width="1"/>
<line x1="26" y1="544.5" x2="1516" y2="544.5" stroke="#e1e1e1" stroke-width="1"/>
<line x1="26" y1="563.5" x2="1516" y2="563.5" stroke="#e1e1e1" stroke-width="1"/>
<line x1="26" y1="582.5" x2="1516" y2="582.5" stroke="#e1e1e1" stroke-width="1"/>
<line x1="26" y1="602.5" x2="1516" y2="602.5" stroke="#e1e1e1" stroke-width="1"/>
<line x1="26" y1="621.5" x2="1516" y2="621.5" stroke="#e1e1e1" stroke-width="1"/>
<line x1="26" y1="640.5" x2="1516" y2="640.5" stroke="#e1e1e1" stroke-width="1"/>
<line x1="26" y1="659.5" x2="1516" y2="659.5" stroke="#e1e1e1" stroke-width="1"/>
<line x1="26" y1="678.5" x2="1516" y2="678.5" stroke="#e1e1e1" stroke-width="1"/>
<line x1="26" y1="698.5" x2="1516" y2="698.5" stroke="#e1e1e1" stroke-width="1"/>
<line x1="26" y1="717.5" x2="1516" y2="717.5" stroke="#e1e1e1" stroke-width="1"/>
<line x1="26" y1="736.5" x2="1516" y2="736.5" stroke="#e1e1e1" stroke-width="1"/>
<line x1="26" y1="755.5" x2="1516" y2="755.5" stroke="#e1e1e1" stroke-width="1"/>
<line x1="26" y1="774.5" x2="1516" y2="774.5" stroke="#e1e1e1" stroke-width="1"/>
<line x1="90" y1="256" x2="90" y2="771" stroke="#e1e1e1" stroke-width="1.2"/>
<line x1="170" y1="256" x2="170" y2="771" stroke="#e1e1e1" stroke-width="1.2"/>
<line x1="266" y1="256" x2="266" y2="771" stroke="#e1e1e1" stroke-width="1.2"/>
<line x1="382" y1="256" x2="382" y2="771" stroke="#e1e1e1" stroke-width="1.2"/>
<line x1="446" y1="256" x2="446" y2="771" stroke="#e1e1e1" stroke-width="1.2"/>
<line x1="510" y1="256" x2="510" y2="771" stroke="#e1e1e1" stroke-width="1.2"/>
<line x1="574" y1="256" x2="574" y2="771" stroke="#e1e1e1" stroke-width="1.2"/>
<line x1="638" y1="256" x2="638" y2="771" stroke="#e1e1e1" stroke-width="1.2"/>
<line x1="702" y1="256" x2="702" y2="771" stroke="#e1e1e1" stroke-width="1.2"/>
<line x1="766" y1="256" x2="766" y2="771" stroke="#e1e1e1" stroke-width="1.2"/>
<line x1="830" y1="256" x2="830" y2="771" stroke="#e1e1e1" stroke-width="1.2"/>
<line x1="894" y1="256" x2="894" y2="771" stroke="#e1e1e1" stroke-width="1.2"/>
<line x1="958" y1="256" x2="958" y2="771" stroke="#e1e1e1" stroke-width="1.2"/>
<line x1="1022" y1="256" x2="1022" y2="771" stroke="#e1e1e1" stroke-width="1.2"/>
<line x1="1086" y1="256" x2="1086" y2="771" stroke="#e1e1e1" stroke-width="1.2"/>
<line x1="1150" y1="256" x2="1150" y2="771" stroke="#e1e1e1" stroke-width="1.2"/>
<line x1="1214" y1="256" x2="1214" y2="771" stroke="#e1e1e1" stroke-width="1.2"/>
<line x1="1278" y1="256" x2="1278" y2="771" stroke="#e1e1e1" stroke-width="1.2"/>
<line x1="1342" y1="256" x2="1342" y2="771" stroke="#e1e1e1" stroke-width="1.2"/>
<line x1="1406" y1="256" x2="1406" y2="771" stroke="#e1e1e1" stroke-width="1.2"/>
<line x1="1470" y1="256" x2="1470" y2="771" stroke="#e1e1e1" stroke-width="1.2"/>
</g>
<rect x="91" y="256" width="291" height="193" fill="#c6c6c6"/>
<rect x="91" y="257" width="79" height="19" fill="#ffffff"/>
<line x1="91" y1="275.5" x2="382" y2="275.5" stroke="#b4b4b4" stroke-width="1"/>
<line x1="91" y1="294.5" x2="382" y2="294.5" stroke="#b4b4b4" stroke-width="1"/>
<line x1="91" y1="314.5" x2="382" y2="314.5" stroke="#b4b4b4" stroke-width="1"/>
<line x1="91" y1="333.5" x2="382" y2="333.5" stroke="#b4b4b4" stroke-width="1"/>
<line x1="91" y1="352.5" x2="382" y2="352.5" stroke="#b4b4b4" stroke-width="1"/>
<line x1="91" y1="371.5" x2="382" y2="371.5" stroke="#b4b4b4" stroke-width="1"/>
<line x1="91" y1="390.5" x2="382" y2="390.5" stroke="#b4b4b4" stroke-width="1"/>
<line x1="91" y1="410.5" x2="382" y2="410.5" stroke="#b4b4b4" stroke-width="1"/>
<line x1="91" y1="429.5" x2="382" y2="429.5" stroke="#b4b4b4" stroke-width="1"/>
<line x1="170" y1="256" x2="170" y2="448" stroke="#b4b4b4" stroke-width="1.2"/>
<line x1="266" y1="256" x2="266" y2="448" stroke="#b4b4b4" stroke-width="1.2"/>
<rect x="0" y="256" width="26" height="193" fill="#6b6b6b"/>
<line x1="0" y1="275.5" x2="26" y2="275.5" stroke="#8a8a8a" stroke-width="1"/>
<line x1="0" y1="294.5" x2="26" y2="294.5" stroke="#8a8a8a" stroke-width="1"/>
<line x1="0" y1="314.5" x2="26" y2="314.5" stroke="#8a8a8a" stroke-width="1"/>
<line x1="0" y1="333.5" x2="26" y2="333.5" stroke="#8a8a8a" stroke-width="1"/>
<line x1="0" y1="352.5" x2="26" y2="352.5" stroke="#8a8a8a" stroke-width="1"/>
<line x1="0" y1="371.5" x2="26" y2="371.5" stroke="#8a8a8a" stroke-width="1"/>
<line x1="0" y1="390.5" x2="26" y2="390.5" stroke="#8a8a8a" stroke-width="1"/>
<line x1="0" y1="410.5" x2="26" y2="410.5" stroke="#8a8a8a" stroke-width="1"/>
<line x1="0" y1="429.5" x2="26" y2="429.5" stroke="#8a8a8a" stroke-width="1"/>
<line x1="0" y1="448.5" x2="26" y2="448.5" stroke="#8a8a8a" stroke-width="1"/>
<line x1="0" y1="467.5" x2="26" y2="467.5" stroke="#4a4a4a" stroke-width="1"/>
<line x1="0" y1="486.5" x2="26" y2="486.5" stroke="#4a4a4a" stroke-width="1"/>
<line x1="0" y1="506.5" x2="26" y2="506.5" stroke="#4a4a4a" stroke-width="1"/>
<line x1="0" y1="525.5" x2="26" y2="525.5" stroke="#4a4a4a" stroke-width="1"/>
<line x1="0" y1="544.5" x2="26" y2="544.5" stroke="#4a4a4a" stroke-width="1"/>
<line x1="0" y1="563.5" x2="26" y2="563.5" stroke="#4a4a4a" stroke-width="1"/>
<line x1="0" y1="582.5" x2="26" y2="582.5" stroke="#4a4a4a" stroke-width="1"/>
<line x1="0" y1="602.5" x2="26" y2="602.5" stroke="#4a4a4a" stroke-width="1"/>
<line x1="0" y1="621.5" x2="26" y2="621.5" stroke="#4a4a4a" stroke-width="1"/>
<line x1="0" y1="640.5" x2="26" y2="640.5" stroke="#4a4a4a" stroke-width="1"/>
<line x1="0" y1="659.5" x2="26" y2="659.5" stroke="#4a4a4a" stroke-width="1"/>
<line x1="0" y1="678.5" x2="26" y2="678.5" stroke="#4a4a4a" stroke-width="1"/>
<line x1="0" y1="698.5" x2="26" y2="698.5" stroke="#4a4a4a" stroke-width="1"/>
<line x1="0" y1="717.5" x2="26" y2="717.5" stroke="#4a4a4a" stroke-width="1"/>
<line x1="0" y1="736.5" x2="26" y2="736.5" stroke="#4a4a4a" stroke-width="1"/>
<line x1="0" y1="755.5" x2="26" y2="755.5" stroke="#4a4a4a" stroke-width="1"/>
<line x1="26.4" y1="256" x2="26.4" y2="449" stroke="#1d6b3b" stroke-width="1.4"/>
<line x1="1" y1="256.5" x2="26" y2="256.5" stroke="#8a8a8a" stroke-width="1"/>
<text x="13.5" y="271.0" font-size="13" fill="#ffffff" text-anchor="middle" stroke="#ffffff" stroke-width="0.3">1</text>
<text x="13.5" y="290.2" font-size="13" fill="#ffffff" text-anchor="middle" stroke="#ffffff" stroke-width="0.3">2</text>
<text x="13.5" y="309.4" font-size="13" fill="#ffffff" text-anchor="middle" stroke="#ffffff" stroke-width="0.3">3</text>
<text x="13.5" y="328.6" font-size="13" fill="#ffffff" text-anchor="middle" stroke="#ffffff" stroke-width="0.3">4</text>
<text x="13.5" y="347.8" font-size="13" fill="#ffffff" text-anchor="middle" stroke="#ffffff" stroke-width="0.3">5</text>
<text x="13.5" y="367.0" font-size="13" fill="#ffffff" text-anchor="middle" stroke="#ffffff" stroke-width="0.3">6</text>
<text x="13.5" y="386.2" font-size="13" fill="#ffffff" text-anchor="middle" stroke="#ffffff" stroke-width="0.3">7</text>
<text x="13.5" y="405.4" font-size="13" fill="#ffffff" text-anchor="middle" stroke="#ffffff" stroke-width="0.3">8</text>
<text x="13.5" y="424.6" font-size="13" fill="#ffffff" text-anchor="middle" stroke="#ffffff" stroke-width="0.3">9</text>
<text x="13.5" y="443.79999999999995" font-size="13" fill="#ffffff" text-anchor="middle" stroke="#ffffff" stroke-width="0.3">10</text>
<text x="13.5" y="463.0" font-size="13" fill="#e6e6e6" text-anchor="middle" stroke="#e6e6e6" stroke-width="0.3">11</text>
<text x="13.5" y="482.2" font-size="13" fill="#e6e6e6" text-anchor="middle" stroke="#e6e6e6" stroke-width="0.3">12</text>
<text x="13.5" y="501.4" font-size="13" fill="#e6e6e6" text-anchor="middle" stroke="#e6e6e6" stroke-width="0.3">13</text>
<text x="13.5" y="520.6" font-size="13" fill="#e6e6e6" text-anchor="middle" stroke="#e6e6e6" stroke-width="0.3">14</text>
<text x="13.5" y="539.8" font-size="13" fill="#e6e6e6" text-anchor="middle" stroke="#e6e6e6" stroke-width="0.3">15</text>
<text x="13.5" y="559.0" font-size="13" fill="#e6e6e6" text-anchor="middle" stroke="#e6e6e6" stroke-width="0.3">16</text>
<text x="13.5" y="578.2" font-size="13" fill="#e6e6e6" text-anchor="middle" stroke="#e6e6e6" stroke-width="0.3">17</text>
<text x="13.5" y="597.4" font-size="13" fill="#e6e6e6" text-anchor="middle" stroke="#e6e6e6" stroke-width="0.3">18</text>
<text x="13.5" y="616.5999999999999" font-size="13" fill="#e6e6e6" text-anchor="middle" stroke="#e6e6e6" stroke-width="0.3">19</text>
<text x="13.5" y="635.8" font-size="13" fill="#e6e6e6" text-anchor="middle" stroke="#e6e6e6" stroke-width="0.3">20</text>
<text x="13.5" y="655.0" font-size="13" fill="#e6e6e6" text-anchor="middle" stroke="#e6e6e6" stroke-width="0.3">21</text>
<text x="13.5" y="674.2" font-size="13" fill="#e6e6e6" text-anchor="middle" stroke="#e6e6e6" stroke-width="0.3">22</text>
<text x="13.5" y="693.4" font-size="13" fill="#e6e6e6" text-anchor="middle" stroke="#e6e6e6" stroke-width="0.3">23</text>
<text x="13.5" y="712.5999999999999" font-size="13" fill="#e6e6e6" text-anchor="middle" stroke="#e6e6e6" stroke-width="0.3">24</text>
<text x="13.5" y="731.8" font-size="13" fill="#e6e6e6" text-anchor="middle" stroke="#e6e6e6" stroke-width="0.3">25</text>
<text x="13.5" y="751.0" font-size="13" fill="#e6e6e6" text-anchor="middle" stroke="#e6e6e6" stroke-width="0.3">26</text>
<text x="13.5" y="770.2" font-size="13" fill="#e6e6e6" text-anchor="middle" stroke="#e6e6e6" stroke-width="0.3">27</text>
<rect x="90.7" y="255.7" width="291.3" height="192.8" fill="none" stroke="#1d6b3b" stroke-width="1.5"/>
<rect x="379.5" y="446" width="4.8" height="4.5" fill="#1e7145" stroke="#ffffff" stroke-width="0.8"/>
<text x="93.75" y="271" font-size="12.5" fill="#1a1a1a" textLength="46.9" lengthAdjust="spacingAndGlyphs">TV sales</text>
<text x="174" y="271" font-size="12.5" fill="#1a1a1a" textLength="61.7" lengthAdjust="spacingAndGlyphs">radio sales</text>
<text x="269" y="271" font-size="12.5" fill="#1a1a1a" textLength="95.6" lengthAdjust="spacingAndGlyphs">newspaper sales</text>
<text x="167.5" y="290.5" font-size="12.5" fill="#1a1a1a" text-anchor="end">230.1</text>
<text x="262.7" y="290.5" font-size="12.5" fill="#1a1a1a" text-anchor="end">37.8</text>
<text x="378.9" y="290.5" font-size="12.5" fill="#1a1a1a" text-anchor="end">69.2</text>
<text x="167.5" y="309.7" font-size="12.5" fill="#1a1a1a" text-anchor="end">44.5</text>
<text x="262.7" y="309.7" font-size="12.5" fill="#1a1a1a" text-anchor="end">39.3</text>
<text x="378.9" y="309.7" font-size="12.5" fill="#1a1a1a" text-anchor="end">45.1</text>
<text x="167.5" y="328.90000000000003" font-size="12.5" fill="#1a1a1a" text-anchor="end">17.2</text>
<text x="262.7" y="328.90000000000003" font-size="12.5" fill="#1a1a1a" text-anchor="end">45.9</text>
<text x="378.9" y="328.90000000000003" font-size="12.5" fill="#1a1a1a" text-anchor="end">69.3</text>
<text x="167.5" y="348.1" font-size="12.5" fill="#1a1a1a" text-anchor="end">151.5</text>
<text x="262.7" y="348.1" font-size="12.5" fill="#1a1a1a" text-anchor="end">41.3</text>
<text x="378.9" y="348.1" font-size="12.5" fill="#1a1a1a" text-anchor="end">58.5</text>
<text x="167.5" y="367.3" font-size="12.5" fill="#1a1a1a" text-anchor="end">180.8</text>
<text x="262.7" y="367.3" font-size="12.5" fill="#1a1a1a" text-anchor="end">10.8</text>
<text x="378.9" y="367.3" font-size="12.5" fill="#1a1a1a" text-anchor="end">58.4</text>
<text x="167.5" y="386.5" font-size="12.5" fill="#1a1a1a" text-anchor="end">8.7</text>
<text x="262.7" y="386.5" font-size="12.5" fill="#1a1a1a" text-anchor="end">48.9</text>
<text x="378.9" y="386.5" font-size="12.5" fill="#1a1a1a" text-anchor="end">75</text>
<text x="167.5" y="405.7" font-size="12.5" fill="#1a1a1a" text-anchor="end">57.5</text>
<text x="262.7" y="405.7" font-size="12.5" fill="#1a1a1a" text-anchor="end">32.8</text>
<text x="378.9" y="405.7" font-size="12.5" fill="#1a1a1a" text-anchor="end">23.5</text>
<text x="167.5" y="424.90000000000003" font-size="12.5" fill="#1a1a1a" text-anchor="end">120.2</text>
<text x="262.7" y="424.90000000000003" font-size="12.5" fill="#1a1a1a" text-anchor="end">19.6</text>
<text x="378.9" y="424.90000000000003" font-size="12.5" fill="#1a1a1a" text-anchor="end">11.6</text>
<text x="167.5" y="444.09999999999997" font-size="12.5" fill="#1a1a1a" text-anchor="end">8.6</text>
<text x="262.7" y="444.09999999999997" font-size="12.5" fill="#1a1a1a" text-anchor="end">2.1</text>
<text x="378.9" y="444.09999999999997" font-size="12.5" fill="#1a1a1a" text-anchor="end">1</text>
<rect x="385.5" y="477.5" width="21" height="22" fill="#ffffff" stroke="#c8c8c8" stroke-width="1"/>
<rect x="389" y="482" width="14.5" height="13.5" fill="#ffffff" rx="1" stroke="#7a7a7a" stroke-width="1.4"/>
<line x1="393" y1="484" x2="403" y2="484" stroke="#7a7a7a" stroke-width="1.4"/>
<rect x="391.5" y="489" width="10" height="3.5" fill="none" rx="1.5" stroke="#8a8a8a" stroke-width="1"/>
<path d="M391,481 L395,481 L393,484.5 L395.5,484.5 L389.5,490 L391,486 L389,486 Z" fill="#f07c00"/>
<rect x="1518" y="239" width="16" height="15" fill="#2e2e2e" stroke="#4a4a4a" stroke-width="1"/>
<path d="M1522,250 L1526,245.5 L1530,250 Z" fill="#ffffff"/>
<rect x="1518.5" y="255" width="15" height="64" fill="#363636" stroke="#4a4a4a" stroke-width="1"/>
<rect x="1518" y="319.5" width="16" height="437.5" fill="#0c0c0c"/>
<rect x="1518" y="757.4" width="16" height="14" fill="#2e2e2e" stroke="#4a4a4a" stroke-width="1"/>
<path d="M1522,762 L1526,766.5 L1530,762 Z" fill="#ffffff"/>
<path d="M26,779 L21.5,783 L26,787 Z" fill="#bdbdbd"/>
<path d="M45,779 L49.5,783 L45,787 Z" fill="#bdbdbd"/>
<rect x="83" y="771" width="93" height="21" fill="#ffffff"/>
<rect x="83" y="790" width="93" height="2" fill="#1d6b3b"/>
<text x="92.4" y="784.8" font-size="13.5" fill="#1d6b3b" font-weight="700" textLength="73.5" lengthAdjust="spacingAndGlyphs">Advertising</text>
<circle cx="210.4" cy="783" r="8" fill="none" stroke="#e0e0e0" stroke-width="1.3"/>
<path d="M206,783 L214.8,783 M210.4,778.6 L210.4,787.4" fill="none" stroke="#e0e0e0" stroke-width="1.4"/>
<rect x="918.8" y="777.5" width="2.3" height="2.5" fill="#e0e0e0"/>
<rect x="918.8" y="782" width="2.3" height="2.5" fill="#e0e0e0"/>
<rect x="918.8" y="786.5" width="2.3" height="2.5" fill="#e0e0e0"/>
<rect x="934" y="775.2" width="13.6" height="14.5" fill="#2e2e2e" stroke="#4a4a4a" stroke-width="1"/>
<path d="M942.5,778.5 L938,782.5 L942.5,786.5 Z" fill="#ffffff"/>
<rect x="948.9" y="775.5" width="525.6" height="14" fill="#363636" stroke="#4a4a4a" stroke-width="1"/>
<rect x="1475" y="775.2" width="25" height="14.5" fill="#0c0c0c"/>
<rect x="1501.3" y="775.2" width="14.6" height="14.5" fill="#2e2e2e" stroke="#4a4a4a" stroke-width="1"/>
<path d="M1506.5,778.5 L1511,782.5 L1506.5,786.5 Z" fill="#ffffff"/>
<text x="7.8" y="809.8" font-size="11" fill="#e6e6e6" textLength="29.2" lengthAdjust="spacingAndGlyphs" stroke="#e6e6e6" stroke-width="0.3">Ready</text>
<circle cx="63" cy="800" r="2" fill="none" stroke="#e0e0e0" stroke-width="1.1"/>
<path d="M57,804 L69,803 M61,803.5 L60,811 M65,803.5 L66,811 M63,806 L63,808" fill="none" stroke="#e0e0e0" stroke-width="1.1"/>
<text x="73" y="809.8" font-size="11" fill="#e6e6e6" textLength="113.7" lengthAdjust="spacingAndGlyphs" stroke="#e6e6e6" stroke-width="0.3">Accessibility: Unavailable</text>
<text x="990.3" y="809.6" font-size="11" fill="#e6e6e6" textLength="96.9" lengthAdjust="spacingAndGlyphs" stroke="#e6e6e6" stroke-width="0.3">Average: 55.8962963</text>
<text x="1104" y="809.6" font-size="11" fill="#e6e6e6" textLength="43.6" lengthAdjust="spacingAndGlyphs" stroke="#e6e6e6" stroke-width="0.3">Count: 30</text>
<text x="1163" y="809.6" font-size="11" fill="#e6e6e6" textLength="55.8" lengthAdjust="spacingAndGlyphs" stroke="#e6e6e6" stroke-width="0.3">Sum: 1509.2</text>
<rect x="1238.4" y="795" width="40.4" height="21.3" fill="#5a5a5a"/>
<rect x="1250.8" y="797.9" width="14.1" height="14.1" fill="#f0f0f0" rx="1.5"/>
<circle cx="1253.9" cy="801.1" r="1.1" fill="#3a3a3a"/>
<circle cx="1253.9" cy="805.0" r="1.1" fill="#3a3a3a"/>
<circle cx="1253.9" cy="808.9" r="1.1" fill="#3a3a3a"/>
<circle cx="1257.9" cy="801.1" r="1.1" fill="#3a3a3a"/>
<circle cx="1257.9" cy="805.0" r="1.1" fill="#3a3a3a"/>
<circle cx="1257.9" cy="808.9" r="1.1" fill="#3a3a3a"/>
<circle cx="1261.9" cy="801.1" r="1.1" fill="#3a3a3a"/>
<circle cx="1261.9" cy="805.0" r="1.1" fill="#3a3a3a"/>
<circle cx="1261.9" cy="808.9" r="1.1" fill="#3a3a3a"/>
<rect x="1291.5" y="798.7" width="13.6" height="12.6" fill="#3a3a3a" rx="1" stroke="#f0f0f0" stroke-width="1.8"/>
<rect x="1294.2" y="801.2" width="8.2" height="7.6" fill="#bdbdbd"/>
<path d="M1296,802.5 L1296,807.5 M1300.6,802.5 L1300.6,807.5 M1296,805 L1300.6,805" fill="none" stroke="#5a5a5a" stroke-width="0.9"/>
<rect x="1331.9" y="798.7" width="13.6" height="12.6" fill="none" rx="1" stroke="#f0f0f0" stroke-width="1.8"/>
<path d="M1335.5,799.5 L1335.5,804.5 M1339,799.5 L1339,804.5 M1342.2,799.5 L1342.2,806.5 L1333,806.5 L1333,810.5" fill="none" stroke="#f0f0f0" stroke-width="1.5"/>
<line x1="1364" y1="805.5" x2="1371.4" y2="805.5" stroke="#e0e0e0" stroke-width="1.2"/>
<line x1="1377" y1="805.5" x2="1476.6" y2="805.5" stroke="#bdbdbd" stroke-width="1"/>
<rect x="1424.8" y="800" width="5" height="11" fill="#ffffff"/>
<path d="M1481.4,805.5 L1489.4,805.5 M1485.4,801.5 L1485.4,809.5" fill="none" stroke="#e0e0e0" stroke-width="1.2"/>
<text x="1502.9" y="809.5" font-size="11" fill="#e6e6e6" textLength="24.3" lengthAdjust="spacingAndGlyphs" stroke="#e6e6e6" stroke-width="0.3">100%</text>
<line x1="0" y1="816.5" x2="1536" y2="816.5" stroke="#454545" stroke-width="1"/>
<ellipse cx="29.9" cy="840.6" rx="9.6" ry="3.3" fill="#f2a21e"/>
<ellipse cx="33.1" cy="835.9" rx="10.1" ry="3.1" fill="#f7a823"/>
<ellipse cx="29.9" cy="830.7" rx="9.5" ry="3.1" fill="#f9ab28"/>
<path d="M27.3,849.8 L31.8,845.8 L36.4,849.8" fill="none" stroke="#5ac41e" stroke-width="2.6"/>
<text x="51.7" y="835.6" font-size="12" fill="#ffffff" textLength="47.2" lengthAdjust="spacingAndGlyphs" stroke="#ffffff" stroke-width="0.3">USD/INR</text>
<text x="52" y="851.8" font-size="12" fill="#58b858" textLength="39" lengthAdjust="spacingAndGlyphs" stroke="#58b858" stroke-width="0.3">+0.26%</text>
<rect x="400.7" y="828.2" width="11.6" height="11.6" fill="#2fb5f3" rx="1"/>
<rect x="413.3" y="828.2" width="11.6" height="11.6" fill="#2fb5f3" rx="1"/>
<rect x="400.7" y="840.5" width="11.6" height="11.6" fill="#2fb5f3" rx="1"/>
<rect x="413.3" y="840.5" width="11.6" height="11.6" fill="#2fb5f3" rx="1"/>
<rect x="438.7" y="824.1" width="219" height="31.5" fill="#353535" rx="15.75" stroke="#3f3f3f" stroke-width="1"/>
<circle cx="456.5" cy="838.5" r="5" fill="none" stroke="#e8e8e8" stroke-width="1.5"/>
<line x1="460" y1="842" x2="464" y2="846" stroke="#e8e8e8" stroke-width="1.6"/>
<text x="475" y="845.2" font-size="13.5" fill="#e6e6e6" textLength="41" lengthAdjust="spacingAndGlyphs" stroke="#e6e6e6" stroke-width="0.3">Search</text>
<rect x="670" y="833" width="14" height="12" fill="#7a7a7a" rx="1.5"/>
<rect x="677" y="828" width="17.6" height="13" fill="#e8e8e8" rx="1.5"/>
<circle cx="726" cy="839.5" r="11" fill="#6b5bd6"/>
<path d="M716,850 L720,846 L716,845 Z" fill="#6b5bd6"/>
<rect x="720" y="835.5" width="8.5" height="8" fill="#ffffff" rx="1.5"/>
<path d="M729,838 L732.5,835.8 L732.5,843.2 L729,841 Z" fill="#ffffff"/>
<rect x="758" y="832" width="24" height="20" fill="#f0f0f0" rx="3"/>
<path d="M764,832 L764,829 Q764,827.5 766,827.5 L774,827.5 Q776,827.5 776,829 L776,832" fill="none" stroke="#2aa0e0" stroke-width="1.5"/>
<rect x="766" y="838" width="3.5" height="3.5" fill="#f35325"/>
<rect x="770.5" y="838" width="3.5" height="3.5" fill="#81bc06"/>
<rect x="766" y="842.5" width="3.5" height="3.5" fill="#05a6f0"/>
<rect x="770.5" y="842.5" width="3.5" height="3.5" fill="#ffba08"/>
<path d="M803.2,828.5 L814.2,833.8 L825.1,828.5 L825.1,847 L814.2,852.2 L803.2,847 Z M807.6,835.6 L807.6,844.3 L814.2,847.6 L820.7,844.3 L820.7,835.6 L814.2,838.8 Z" fill="#c8262c" fill-rule="evenodd"/>
<rect x="845.9" y="827.9" width="25" height="24.3" fill="#22a8d8"/>
<path d="M852.5,833 L854.5,831.5 L854.5,845.8 L852.5,847.5 Z" fill="#0d2f6e"/>
<path d="M854.5,831.5 L858.8,831.5 L858.8,841.5 L864.5,841.5 L864.5,845.8 L854.5,845.8 Z" fill="#ffffff"/>
<path d="M890.3,829.3 L899.5,829.3 L902,832 L914.6,832 L914.6,850.8 L890.3,850.8 Z" fill="#e6a817"/>
<rect x="890.3" y="833.5" width="24.3" height="17.3" fill="#ffd04a"/>
<rect x="894.6" y="845" width="15" height="5.8" fill="#1a73d0" rx="1"/>
<circle cx="946.5" cy="839.5" r="11.5" fill="#1ed760"/>
<path d="M940,835.5 Q947,832.5 953.5,836.5 M941,839.5 Q947,837.5 952.5,840.5 M942,843.5 Q947,842 951.5,844.3" fill="none" stroke="#111" stroke-width="1.8"/>
<circle cx="990.6" cy="839.3" r="12" fill="#1f7fd4"/>
<path d="M979,836 Q981,827.5 991,827.3 Q1001.5,827.5 1002.6,838 Q1002.5,842.5 998,843 L985.5,843 Q987,839 991.5,838.5 Q995,838.5 995,841 Q993,833 985,834.5 Q981,835.5 979,836 Z" fill="#3fc08a"/>
<path d="M985.5,843 Q988,849 995.5,849.5 Q991,852 985.5,850.5 Z" fill="#1a5fb4"/>
<circle cx="990.5" cy="839.5" r="2.6" fill="#1e2226"/>
<circle cx="984.1" cy="846.5" r="5.5" fill="#8a8a8a"/>
<circle cx="984.1" cy="845" r="1.9" fill="#d8d8d8"/>
<path d="M980.8,849.5 Q984.1,846.5 987.4,849.5" fill="none" stroke="#d8d8d8" stroke-width="1.6"/>
<path d="M1034.2,839.9 L1044.77,833.8 A12.2,12.2 0 0 0 1023.63,833.8 Z" fill="#db4437"/>
<path d="M1034.2,839.9 L1023.63,833.8 A12.2,12.2 0 0 0 1034.2,852.1 Z" fill="#0f9d58"/>
<path d="M1034.2,839.9 L1034.2,852.1 A12.2,12.2 0 0 0 1044.77,833.8 Z" fill="#f4b400"/>
<circle cx="1034.2" cy="839.9" r="5.6" fill="#ffffff"/>
<circle cx="1034.2" cy="839.9" r="4.4" fill="#4285f4"/>
<path d="M1078.2,839.9 L1088.77,833.8 A12.2,12.2 0 0 0 1067.63,833.8 Z" fill="#db4437"/>
<path d="M1078.2,839.9 L1067.63,833.8 A12.2,12.2 0 0 0 1078.2,852.1 Z" fill="#0f9d58"/>
<path d="M1078.2,839.9 L1078.2,852.1 A12.2,12.2 0 0 0 1088.77,833.8 Z" fill="#f4b400"/>
<circle cx="1078.2" cy="839.9" r="5.6" fill="#ffffff"/>
<circle cx="1078.2" cy="839.9" r="4.4" fill="#4285f4"/>
<circle cx="1042.8" cy="831.2" r="7.3" fill="#0f5ca8"/>
<text x="1042.8" y="834.8" font-size="9" fill="#c8d8f0" font-weight="700" text-anchor="middle">S</text>
<circle cx="1087" cy="830.8" r="7.5" fill="#8f8780"/>
<path d="M1082,834 Q1085,826 1088,828 Q1091,831 1092,835" fill="none" stroke="#6a5f58" stroke-width="1.2"/>
<rect x="1102" y="820" width="40.3" height="39.2" fill="#2d2d2d" rx="5"/>
<rect x="1115.7" y="828.5" width="18.3" height="5.5" fill="#33c481"/>
<rect x="1115.7" y="834" width="18.3" height="5.5" fill="#21a366"/>
<rect x="1115.7" y="839.5" width="18.3" height="5.5" fill="#107c41"/>
<rect x="1115.7" y="845" width="18.3" height="5.4" fill="#185c37"/>
<rect x="1125" y="828.5" width="9" height="5.5" fill="#3fd08e"/>
<rect x="1110.3" y="833.5" width="11.8" height="12.3" fill="#107c41" rx="1"/>
<path d="M1113.5,836.5 L1119,842.8 M1119,836.5 L1113.5,842.8" fill="none" stroke="#ffffff" stroke-width="1.6"/>
<rect x="1114.3" y="856" width="16" height="2.5" fill="#4cc2ff" rx="1.2"/>
<rect x="899.3" y="856.5" width="6" height="2.2" fill="#8a8a8a" rx="1"/>
<rect x="943" y="856.5" width="6" height="2.2" fill="#8a8a8a" rx="1"/>
<rect x="987" y="856.5" width="6" height="2.2" fill="#8a8a8a" rx="1"/>
<rect x="1031" y="856.5" width="6" height="2.2" fill="#8a8a8a" rx="1"/>
<rect x="1075" y="856.5" width="6" height="2.2" fill="#8a8a8a" rx="1"/>
<path d="M1278,843 L1283.3,836.5 L1288.6,843" fill="none" stroke="#ffffff" stroke-width="1.5"/>
<text x="1309.3" y="836.8" font-size="12" fill="#ffffff" textLength="23.3" lengthAdjust="spacingAndGlyphs" stroke="#ffffff" stroke-width="0.3">ENG</text>
<text x="1314.7" y="852.7" font-size="12" fill="#ffffff" textLength="12.5" lengthAdjust="spacingAndGlyphs" stroke="#ffffff" stroke-width="0.3">IN</text>
<path d="M1350.5,837.5 Q1358.5,830 1366.5,837.5 M1353,840 Q1358.5,835 1364,840 M1355.5,842.5 Q1358.5,840 1361.5,842.5" fill="none" stroke="#ffffff" stroke-width="1.4"/>
<circle cx="1358.5" cy="845" r="1.2" fill="#ffffff"/>
<path d="M1374.5,836.5 L1377.5,836.5 L1381.5,833.5 L1381.5,846 L1377.5,843 L1374.5,843 Z" fill="none" stroke="#ffffff" stroke-width="1.2"/>
<path d="M1384,836.5 Q1386,839.8 1384,843 M1386.5,834.5 Q1390,839.8 1386.5,845 M1389,832.5 Q1393.5,839.8 1389,847" fill="none" stroke="#ffffff" stroke-width="1.2"/>
<rect x="1398.2" y="835.5" width="15" height="9.5" fill="none" rx="1.5" stroke="#ffffff" stroke-width="1.2"/>
<rect x="1413.5" y="838.5" width="1.5" height="3.5" fill="#ffffff"/>
<rect x="1400" y="837.5" width="10" height="5.5" fill="#ffffff"/>
<path d="M1401,836 L1403,832.5 M1403,832.5 L1404.5,834" fill="none" stroke="#ffffff" stroke-width="1"/>
<text x="1492.5" y="835.8" font-size="12" fill="#ffffff" textLength="28.5" lengthAdjust="spacingAndGlyphs" text-anchor="end" stroke="#ffffff" stroke-width="0.3">11:38</text>
<text x="1492.5" y="851.7" font-size="12" fill="#ffffff" textLength="61.7" lengthAdjust="spacingAndGlyphs" text-anchor="end" stroke="#ffffff" stroke-width="0.3">20-06-2023</text>
<circle cx="1508.2" cy="840.2" r="8" fill="#4cc2ff"/>
<text x="1508.2" y="844" font-size="10" fill="#0a2a40" text-anchor="middle">1</text>
</svg>
</body></html>
